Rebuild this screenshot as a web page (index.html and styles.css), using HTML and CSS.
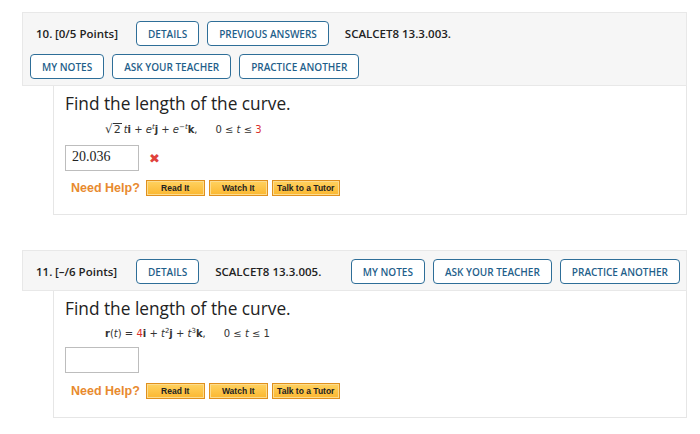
FILE: index.html
```html
<!DOCTYPE html>
<html>
<head>
<meta charset="utf-8">
<link rel="stylesheet" href="styles.css">
</head>
<body>
<div class="page">
  <section class="card card-first">
    <div class="qhead">
      <div class="row">
        <span class="qnum">10.</span>
        <span class="pts">[0/5 Points]</span>
        <span class="btn">DETAILS</span>
        <span class="btn">PREVIOUS ANSWERS</span>
        <span class="code">SCALCET8 13.3.003.</span>
      </div>
      <div class="row">
        <span class="btn">MY NOTES</span>
        <span class="btn">ASK YOUR TEACHER</span>
        <span class="btn">PRACTICE ANOTHER</span>
      </div>
    </div>
    <div class="qbody">
      <div class="prompt">Find the length of the curve.</div>
      <div class="formula"><span class="rad"><span class="radsign">√</span><span class="radicand">2</span></span>&thinsp;<i>t</i><b>i</b> + <i>e</i><sup><i>t</i></sup><b>j</b> + <i>e</i><sup>−<i>t</i></sup><b>k</b>,<span class="range">0 ≤ <i>t</i> ≤ <span class="red">3</span></span></div>
      <div class="answer">
        <div class="input">20.036</div>
        <span class="wrong">✖</span>
      </div>
      <div class="help">
        <span class="need">Need Help?</span>
        <span class="hbtn">Read It</span>
        <span class="hbtn">Watch It</span>
        <span class="hbtn">Talk to a Tutor</span>
      </div>
    </div>
  </section>

  <section class="card card-second">
    <div class="qhead">
      <div class="row">
        <span class="qnum">11.</span>
        <span class="pts">[–/6 Points]</span>
        <span class="btn">DETAILS</span>
        <span class="code">SCALCET8 13.3.005.</span>
        <div class="right">
          <span class="btn">MY NOTES</span>
          <span class="btn">ASK YOUR TEACHER</span>
          <span class="btn">PRACTICE ANOTHER</span>
        </div>
      </div>
    </div>
    <div class="qbody">
      <div class="prompt">Find the length of the curve.</div>
      <div class="formula"><b>r</b>(<i>t</i>) = <span class="red">4</span><b>i</b> + <i>t</i><sup>2</sup><b>j</b> + <i>t</i><sup>3</sup><b>k</b>,<span class="range">0 ≤ <i>t</i> ≤ 1</span></div>
      <div class="answer">
        <div class="input"></div>
      </div>
      <div class="help">
        <span class="need">Need Help?</span>
        <span class="hbtn">Read It</span>
        <span class="hbtn">Watch It</span>
        <span class="hbtn">Talk to a Tutor</span>
      </div>
    </div>
  </section>
</div>
</body>
</html>
```

FILE: styles.css
```css
html, body {
  margin: 0;
  padding: 0;
  background: #ffffff;
}
.page {
  padding: 12px 13px 0 22px;
  font-family: "Open Sans", "DejaVu Sans", sans-serif;
  color: #222;
}
.card-second {
  margin-top: 35px;
}
.qhead {
  background: #f6f6f6;
  border: 1px solid #e8e8e8;
  padding: 8px 6px 6px 7px;
  display: flex;
  flex-direction: column;
  gap: 8px;
}
.row {
  display: flex;
  align-items: center;
  height: 25px;
}
.qnum {
  font-size: 11.5px;
  font-weight: 600;
  margin-left: 6px;
  width: 19px;
  color: #222;
}
.pts {
  font-size: 11.5px;
  font-weight: 600;
  width: 65px;
  margin-right: 16px;
  color: #222;
  white-space: nowrap;
}
.btn {
  box-sizing: border-box;
  height: 25px;
  display: inline-flex;
  align-items: center;
  padding: 0 11px;
  border: 1.5px solid #2e6e98;
  border-radius: 4px;
  background: #ffffff;
  color: #1f5f8b;
  font-size: 10px;
  font-weight: 600;
  margin-right: 8px;
  white-space: nowrap;
}
.code {
  font-size: 11.5px;
  font-weight: 600;
  margin-left: 8px;
  color: #222;
}
.right {
  margin-left: auto;
  display: flex;
}
.right .btn:last-child,
.row .btn:last-child {
  margin-right: 0;
}
.qbody {
  margin-left: 31px;
  border-left: 1px solid #e6e6e6;
  border-right: 1px solid #e6e6e6;
  border-bottom: 1px solid #e6e6e6;
  padding: 6px 0 18px 11px;
}
.prompt {
  font-size: 17.3px;
  color: #222;
  line-height: 23px;
}
.formula {
  font-family: "DejaVu Sans", sans-serif;
  font-size: 10px;
  color: #333;
  margin: 7px 0 0 40px;
  line-height: 14px;
}
.formula i { font-style: italic; }
.formula b { font-weight: bold; }
.formula sup { font-size: 7px; line-height: 0; }
.range { margin-left: 18px; }
.red { color: #d9302c; }
.rad { display: inline-flex; align-items: flex-end; }
.radsign { font-size: 12px; }
.radicand {
  border-top: 1px solid #333;
  font-size: 11px;
  padding: 0 1px;
  line-height: 12px;
}
.answer {
  display: flex;
  align-items: center;
  margin-top: 8px;
  height: 26px;
}
.card-second .answer {
  margin-top: 6px;
}
.input {
  box-sizing: border-box;
  width: 74px;
  height: 26px;
  border: 1px solid #bdbdbd;
  font-family: "Liberation Serif", serif;
  font-size: 14px;
  color: #222;
  padding: 3px 0 0 6px;
}
.wrong {
  color: #e0423b;
  font-size: 13px;
  margin-left: 10px;
  font-family: "DejaVu Sans", sans-serif;
}
.help {
  display: flex;
  align-items: center;
  margin-top: 9px;
  padding-left: 6px;
}
.card-second .help {
  margin-top: 10px;
}
.need {
  font-family: "Liberation Sans", Arial, sans-serif;
  font-weight: bold;
  font-size: 12.5px;
  color: #e88a2e;
  margin-right: 6px;
}
.hbtn {
  box-sizing: border-box;
  width: 59px;
  height: 16px;
  margin-right: 4px;
  display: inline-flex;
  align-items: center;
  justify-content: center;
  background: linear-gradient(#ffd260, #fbb730);
  border: 1px solid #e0901e;
  box-shadow: inset 0 0 0 1px #fcdc8e;
  font-family: "Liberation Sans", Arial, sans-serif;
  font-weight: bold;
  font-size: 8.5px;
  color: #222;
}
.hbtn:last-child { width: 68px; }
```
